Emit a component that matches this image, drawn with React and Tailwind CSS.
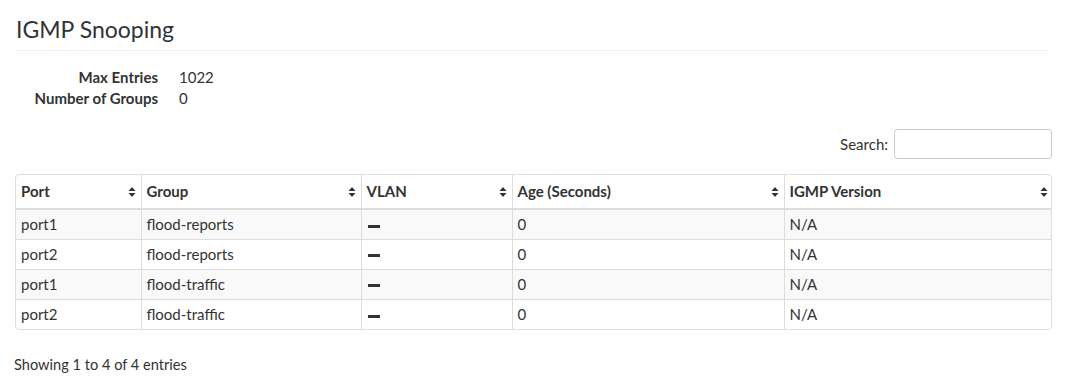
import React from "react";

const rows = [
  { port: "port1", group: "flood-reports", vlan: "—", age: "0", ver: "N/A" },
  { port: "port2", group: "flood-reports", vlan: "—", age: "0", ver: "N/A" },
  { port: "port1", group: "flood-traffic", vlan: "—", age: "0", ver: "N/A" },
  { port: "port2", group: "flood-traffic", vlan: "—", age: "0", ver: "N/A" },
];

const cols = [
  { label: "Port", w: "w-[125px]" },
  { label: "Group", w: "w-[220px]" },
  { label: "VLAN", w: "w-[151px]" },
  { label: "Age (Seconds)", w: "w-[272px]" },
  { label: "IGMP Version", w: "w-[269px]" },
];

function SortIcon() {
  return (
    <svg width="8" height="12" viewBox="0 0 8 12" className="shrink-0">
      <path d="M0.5 5 L4 1 L7.5 5 Z" fill="#333" />
      <path d="M0.5 7 L4 11 L7.5 7 Z" fill="#333" />
    </svg>
  );
}

export default function App() {
  return (
    <div
      className="w-[1065px] h-[384px] bg-white text-[#333] text-[15px] pl-[15px] pr-[13px]"
      style={{ fontFamily: "Lato, 'Open Sans', sans-serif" }}
    >
      <h1 className="ml-px mr-[5px] pt-[16px] pb-[7px] text-[23px] leading-[27px] border-b border-[#eee] text-[#333]">
        IGMP Snooping
      </h1>

      <div className="mt-[16px] grid grid-cols-[143px_auto] gap-x-[21px] w-max leading-[21px]">
        <div className="text-right font-bold">Max Entries</div>
        <div>1022</div>
        <div className="text-right font-bold">Number of Groups</div>
        <div>0</div>
      </div>

      <div className="mt-[20px] flex justify-end items-center gap-[6px]">
        <span>Search:</span>
        <input
          type="text"
          className="w-[158px] h-[30px] border border-[#ccc] rounded-[3px] outline-none px-2"
        />
      </div>

      <div className="mt-[15px] w-[1037px] border border-[#ddd] rounded-[4px] overflow-hidden">
        <table className="w-full border-collapse table-fixed">
          <thead>
            <tr className="border-b-2 border-[#ddd]">
              {cols.map((c, i) => (
                <th
                  key={c.label}
                  className={`${c.w} h-[34px] px-[5px] text-left font-bold ${i > 0 ? "border-l border-[#ddd]" : ""}`}
                >
                  <div className="flex items-center justify-between">
                    <span>{c.label}</span>
                    <SortIcon />
                  </div>
                </th>
              ))}
            </tr>
          </thead>
          <tbody>
            {rows.map((r, ri) => (
              <tr
                key={ri}
                className={`${ri % 2 === 0 ? "bg-[#f9f9f9]" : "bg-white"} ${ri > 0 ? "border-t border-[#ddd]" : ""}`}
              >
                {[r.port, r.group, r.vlan, r.age, r.ver].map((v, ci) => (
                  <td
                    key={ci}
                    className={`h-[30px] px-[5px] ${ci > 0 ? "border-l border-[#ddd]" : ""}`}
                  >
                    {ci === 2 ? (
                      <span className="inline-block align-middle ml-[1px] w-[12px] h-[3px] bg-[#333]" aria-label={v} />
                    ) : (
                      v
                    )}
                  </td>
                ))}
              </tr>
            ))}
          </tbody>
        </table>
      </div>

      <div className="mt-[24px] -ml-px text-[14.6px]">Showing 1 to 4 of 4 entries</div>
    </div>
  );
}
